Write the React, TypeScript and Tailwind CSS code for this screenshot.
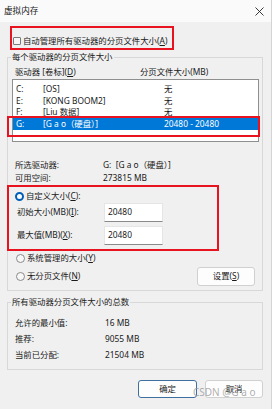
import React from "react";

const rows = [
  { d: "C:", label: "[OS]", size: "无" },
  { d: "E:", label: "[KONG BOOM2]", size: "无" },
  { d: "F:", label: "[Liu 数据]", size: "无" },
  { d: "G:", label: "[G a o（硬盘）]", size: "20480 - 20480", selected: true },
];

function Radio({ checked }: { checked?: boolean }) {
  if (checked) {
    return <span className="box-border block w-[9px] h-[9px] shrink-0 rounded-full border-[2.5px] border-[#005fb8] bg-white" />;
  }
  return <span className="box-border block w-[9px] h-[9px] shrink-0 rounded-full border border-[#8a8a8a] bg-[#f7f7f7]" />;
}

function Field({ value }: { value: string }) {
  return (
    <div className="box-border w-[59px] h-[19px] bg-white border border-[#e5e5e5] border-b-[#8a8a8a] pl-[3px] pt-[1px] leading-[13px]">
      {value}
    </div>
  );
}

export default function App() {
  return (
    <div className="w-[273px] h-[409px] bg-white overflow-hidden">
      <div className="relative w-[272px] h-[409px] bg-[#f0f0f0] border-r border-[#d4d4d4] text-[8.4px] text-[#1a1a1a] font-['Noto_Sans','Noto_Sans_CJK_SC',sans-serif]">
        {/* title bar */}
        <div className="flex h-[22px] items-center justify-between bg-[#fafafa] pl-[4px] pr-[7px]">
          <span className="text-[8.6px] leading-none">虚拟内存</span>
          <svg width="9" height="9" viewBox="0 0 9 9" className="stroke-[#222]">
            <path d="M0.5 0.5 L8.5 8.5 M8.5 0.5 L0.5 8.5" strokeWidth="0.9" />
          </svg>
        </div>

        {/* auto manage */}
        <div className="ml-[10px] mt-[4px] box-border h-[24px] w-[164px] border-2 border-[#e8131f] pl-[1px] pt-[8px]">
          <div className="flex h-[10px] items-center gap-[2px]">
            <span className="box-border block h-[8px] w-[8px] rounded-[1px] border border-[#7a7a7a] bg-[#f7f7f7]" />
            <span className="leading-none">
              自动管理所有驱动器的分页文件大小(<u>A</u>)
            </span>
          </div>
        </div>

        {/* per drive group */}
        <fieldset className="relative ml-[7px] mt-[1px] w-[256px] border border-[#d8d8d8] pb-[4px]">
          <legend className="ml-[3px] px-[1px] leading-[12px]">每个驱动器的分页文件大小</legend>

          <div className="mt-[3px] flex h-[12px] items-center pl-[7px] leading-none">
            <span className="w-[125px]">
              驱动器 [卷标](<u>D</u>)
            </span>
            <span>分页文件大小(MB)</span>
          </div>

          <div className="ml-[4px] mt-[1px] box-border h-[63px] w-[247px] border border-[#8f8f8f] bg-white pt-[3.5px]">
            {rows.map((r) => (
              <div
                key={r.d}
                className={
                  r.selected
                    ? "flex h-[11.5px] items-center bg-[#0078d7] pl-[3px] leading-none text-white"
                    : "flex h-[11.5px] items-center pl-[3px] leading-none"
                }
              >
                <span className="w-[27px]">{r.d}</span>
                <span className="w-[121px]">{r.label}</span>
                <span>{r.size}</span>
              </div>
            ))}
          </div>

          {/* annotation around selected row */}
          <div className="absolute left-[-1px] top-[53px] h-[21px] w-[253px] border-2 border-[#e8131f]" />

          <div className="mt-[17px] flex h-[12px] items-center pl-[7px] leading-none">
            <span className="w-[88px]">所选驱动器:</span>
            <span>G:&nbsp;&nbsp;[G a o（硬盘）]</span>
          </div>
          <div className="mt-[1px] flex h-[12px] items-center pl-[7px] leading-none">
            <span className="w-[88px]">可用空间:</span>
            <span>273815 MB</span>
          </div>

          {/* custom size */}
          <div className="-ml-[1px] mt-[1px] box-border h-[66px] w-[212px] border-2 border-[#e8131f]">
            <div className="mt-[3px] flex h-[12px] items-center gap-[2px] pl-[6px] leading-none">
              <Radio checked />
              <span>
                自定义大小(<u>C</u>):
              </span>
            </div>
            <div className="mt-[1px] flex h-[19px] items-center pl-[8px] leading-none">
              <span className="w-[87px]">
                初始大小(MB)(<u>I</u>):
              </span>
              <Field value="20480" />
            </div>
            <div className="mt-[4px] flex h-[19px] items-center pl-[8px] leading-none">
              <span className="w-[87px]">
                最大值(MB)(<u>X</u>):
              </span>
              <Field value="20480" />
            </div>
          </div>

          <div className="mt-[1px] flex h-[12px] items-center gap-[2px] pl-[8px] leading-none">
            <Radio />
            <span>
              系统管理的大小(<u>Y</u>)
            </span>
          </div>
          <div className="mt-[3px] flex h-[19px] items-center pl-[8px] pr-[7px] leading-none">
            <div className="flex items-center gap-[2px]">
              <Radio />
              <span>
                无分页文件(<u>N</u>)
              </span>
            </div>
            <button className="ml-auto box-border h-[19px] w-[58px] rounded-[3px] border border-[#d0d0d0] bg-[#fdfdfd] leading-none">
              设置(<u>S</u>)
            </button>
          </div>
        </fieldset>

        {/* totals */}
        <fieldset className="ml-[7px] mt-[5px] w-[256px] border border-[#d8d8d8] pb-[6px]">
          <legend className="ml-[3px] px-[1px] leading-[12px]">所有驱动器分页文件大小的总数</legend>
          <div className="mt-[7px] flex h-[16px] items-center pl-[7px] leading-none">
            <span className="w-[90px]">允许的最小值:</span>
            <span>16 MB</span>
          </div>
          <div className="flex h-[16px] items-center pl-[7px] leading-none">
            <span className="w-[90px]">推荐:</span>
            <span>9055 MB</span>
          </div>
          <div className="flex h-[16px] items-center pl-[7px] leading-none">
            <span className="w-[90px]">当前已分配:</span>
            <span>21504 MB</span>
          </div>
        </fieldset>

        {/* dialog buttons */}
        <div className="mt-[10px] flex justify-end gap-[8px] pr-[8px]">
          <button className="box-border h-[18px] w-[59px] rounded-[3px] border border-[#3f6fa0] bg-[#fdfdfd] leading-none">
            确定
          </button>
          <button className="box-border h-[18px] w-[58px] rounded-[3px] border border-[#d0d0d0] bg-[#fdfdfd] leading-none">
            取消
          </button>
        </div>

        <span className="absolute left-[193px] top-[387px] text-[10px] leading-none text-[#9a9a9a]/80">CSDN @G a o</span>
      </div>
    </div>
  );
}
